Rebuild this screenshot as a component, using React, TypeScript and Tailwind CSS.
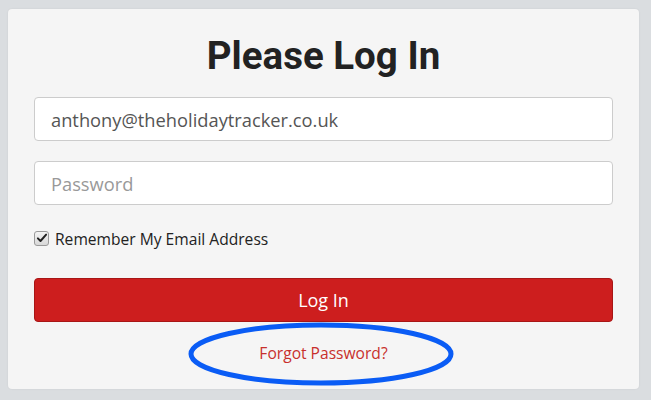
import { useState } from 'react';

// --- Case à cocher façon navigateur classique --- //
const CheckBox = ({ checked, onToggle }: { checked: boolean; onToggle: () => void }) => (
  <span
    onClick={onToggle}
    className="flex h-[15px] w-[15px] shrink-0 items-center justify-center rounded-[3px] border border-[#9a9a9a] bg-gradient-to-b from-[#f4f4f4] to-[#d8d8d8]"
  >
    {checked && (
      <svg viewBox="0 0 16 16" className="h-[12px] w-[12px]">
        <path d="M2.5 8.5 L6 12 L13.5 3.5" fill="none" stroke="#222" strokeWidth="2.6" strokeLinecap="round" strokeLinejoin="round" />
      </svg>
    )}
  </span>
);

const App = () => {
  const [remember, setRemember] = useState(true);
  const font = { fontFamily: '"Open Sans", "Liberation Sans", sans-serif' };

  return (
    <div className="h-[400px] w-[651px] bg-[#dadde0] px-[8px] pt-[9px]" style={font}>
      <div className="h-[380px] w-[631px] rounded-[4px] bg-[#f5f5f5] px-[26px] pt-[26px] shadow-[0_0_2px_rgba(0,0,0,0.08)]">
        <h1
          className="text-center text-[38.5px] font-bold leading-[42px] text-[#222]"
          style={{ fontFamily: 'Roboto, "Liberation Sans", sans-serif' }}
        >
          Please Log In
        </h1>

        <input
          type="email"
          defaultValue="anthony@theholidaytracker.co.uk"
          className="mt-[20px] block h-[44px] w-full rounded-[4px] border border-[#cccccc] bg-white px-[16px] text-[18.3px] text-[#555] outline-none"
        />
        <input
          type="password"
          placeholder="Password"
          className="mt-[20px] block h-[44px] w-full rounded-[4px] border border-[#cccccc] bg-white px-[16px] text-[18.3px] text-[#555] outline-none placeholder:text-[#999]"
        />

        <label className="mt-[21px] flex h-[24px] items-center gap-[6px] text-[15.6px] text-[#222]">
          <CheckBox checked={remember} onToggle={() => setRemember(!remember)} />
          <span className="translate-y-[2px]">Remember My Email Address</span>
        </label>

        <button className="mt-[28px] block h-[44px] w-full rounded-[4px] border border-[#a81616] bg-[#cd1e1e] text-[18px] text-white">
          Log In
        </button>

        <div className="relative mt-[21px] flex h-[22px] items-center justify-center">
          <a href="#" className="text-[15.6px] text-[#c8302c]">
            Forgot Password?
          </a>
          {/* annotation entourant le lien */}
          <svg className="pointer-events-none absolute left-[153px] top-[-21px] h-[64px] w-[268px]" viewBox="0 0 268 64">
            <ellipse cx="134" cy="32" rx="130" ry="29" fill="none" stroke="#0a5cf5" strokeWidth="5" />
          </svg>
        </div>
      </div>
    </div>
  );
};

export default App;
